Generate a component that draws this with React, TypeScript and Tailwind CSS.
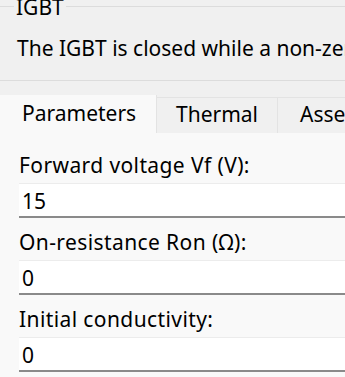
import React from "react";

const font = { fontFamily: '"Noto Sans", "Open Sans", sans-serif' };

function Field({ label, value }: { label: string; value: string }) {
  return (
    <div className="flex flex-col">
      <div className="h-[20px] leading-[20px] text-[21px] tracking-[0.4px] text-black whitespace-nowrap">{label}</div>
      <div className="mt-[8px] h-[35px] bg-white border-t border-t-[#ececec] border-b-2 border-b-[#8a8a8a] flex items-center pl-[3px] pt-[2px] -mr-[20px]">
        <span className="leading-[20px] text-[21px] text-black">{value}</span>
      </div>
    </div>
  );
}

export default function App() {
  return (
    <div className="w-[345px] h-[377px] overflow-hidden bg-[#f0f0f0] flex flex-col" style={font}>
      {/* group box */}
      <div className="h-[81px] border-b border-[#dcdcdc] flex flex-col">
        <div className="relative h-[12px]">
          <div className="absolute left-0 right-0 top-[6px] h-px bg-[#dcdcdc]" />
          <div className="absolute left-[14px] top-[-3px] px-[2px] bg-[#f0f0f0] text-[21px] leading-[20px] text-black">IGBT</div>
        </div>
        <div className="pl-[17px] mt-[26px] h-[20px] text-[21px] leading-[20px] text-black whitespace-nowrap">
          The IGBT is closed while a non-zero voltage
        </div>
      </div>
      {/* tabs */}
      <div className="mt-[14px] h-[38px] flex items-end">
        <div className="w-[157px] h-[38px] bg-[#f9f9f9] border-r border-[#e3e3e3] pl-[22px] pt-[8px]">
          <div className="text-[21px] leading-[20px] text-black">Parameters</div>
        </div>
        <div className="w-[121px] h-[36px] bg-[#f0f0f0] border-r border-t border-[#e3e3e3] pl-[19px] pt-[6px]">
          <div className="text-[21px] leading-[20px] text-black">Thermal</div>
        </div>
        <div className="flex-1 h-[36px] bg-[#f0f0f0] border-t border-[#e3e3e3] pl-[22px] pt-[6px] whitespace-nowrap overflow-hidden">
          <div className="text-[21px] leading-[20px] text-black">Assembly</div>
        </div>
      </div>
      {/* content */}
      <div className="flex-1 bg-[#f9f9f9] pl-[19px] pt-[22px] flex flex-col gap-[14px]">
        <Field label="Forward voltage Vf (V):" value="15" />
        <Field label="On-resistance Ron (Ω):" value="0" />
        <Field label="Initial conductivity:" value="0" />
      </div>
    </div>
  );
}
